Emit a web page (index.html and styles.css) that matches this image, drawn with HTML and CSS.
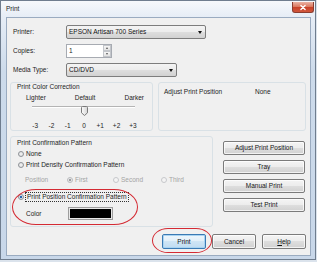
FILE: index.html
```html
<!DOCTYPE html>
<html>
<head>
<meta charset="utf-8">
<link rel="stylesheet" href="styles.css">
</head>
<body>
<div class="window">
  <div class="titlebar">
    <span class="title">Print</span>
    <div class="close">
      <svg viewBox="0 0 22 11" width="22" height="11"><path d="M8.7 3.2 L13.3 7.8 M13.3 3.2 L8.7 7.8" stroke="#fff" stroke-width="1.5" stroke-linecap="round"/></svg>
    </div>
  </div>
  <div class="content">
    <div class="fields">
      <span class="lbl">Printer:</span>
      <div class="combo combo-printer"><span>EPSON Artisan 700 Series</span><i class="arrow"></i></div>
      <span class="lbl">Copies:</span>
      <div class="spin"><span class="spin-val">1</span><div class="spin-btns"><div class="spin-btn"><i class="up"></i></div><div class="spin-btn"><i class="down"></i></div></div></div>
      <span class="lbl">Media Type:</span>
      <div class="combo combo-media"><span>CD/DVD</span><i class="arrow"></i></div>
    </div>

    <div class="groups">
      <div class="group color-group">
        <div class="gtitle">Print Color Correction</div>
        <div class="scale-names"><span class="s-left">Lighter</span><span>Default</span><span class="s-right">Darker</span></div>
        <div class="slider">
          <div class="track"></div>
          <svg class="thumb" viewBox="0 0 7 10" width="7" height="10">
            <defs><linearGradient id="tg" x1="0" y1="0" x2="1" y2="0"><stop offset="0" stop-color="#fdfdfd"/><stop offset="1" stop-color="#d4d4d4"/></linearGradient></defs>
            <path d="M0.5 1.5 Q0.5 0.5 1.5 0.5 H5.5 Q6.5 0.5 6.5 1.5 V6.8 L3.5 9.5 L0.5 6.8 Z" fill="url(#tg)" stroke="#7a7a7a" stroke-width="1"/>
          </svg>
        </div>
        <div class="ticks"><span>-3</span><span>-2</span><span>-1</span><span>0</span><span>+1</span><span>+2</span><span>+3</span></div>
      </div>
      <div class="group pos-group">
        <span>Adjust Print Position</span><span>None</span>
      </div>
    </div>

    <div class="lower">
      <div class="group confirm-group">
        <div class="gtitle">Print Confirmation Pattern</div>
        <div class="opt opt-first"><i class="radio"></i><span>None</span></div>
        <div class="opt"><i class="radio"></i><span>Print Density Confirmation Pattern</span></div>
        <div class="position-row">
          <span class="disabled">Position</span>
          <div class="opt-inline"><i class="radio radio-dis-checked"></i><span class="disabled">First</span></div>
          <div class="opt-inline"><i class="radio radio-dis"></i><span class="disabled">Second</span></div>
          <div class="opt-inline"><i class="radio radio-dis"></i><span class="disabled">Third</span></div>
        </div>
        <div class="opt opt-focus"><i class="radio radio-checked"></i><span class="focus">Print Position Confirmation Pattern</span></div>
        <div class="color-row"><span class="color-lbl">Color</span><div class="swatch"><div class="swatch-fill"></div></div></div>
      </div>
      <div class="side-buttons">
        <div class="btn">Adjust Print Position</div>
        <div class="btn">Tray</div>
        <div class="btn">Manual Print</div>
        <div class="btn">Test Print</div>
      </div>
    </div>

    <div class="footer">
      <div class="btn btn-foot btn-default">Print</div>
      <div class="btn btn-foot">Cancel</div>
      <div class="btn btn-foot"><span><u>H</u>elp</span></div>
    </div>

    <div class="mark mark-pattern"></div>
    <div class="mark mark-print"></div>
  </div>
</div>
</body>
</html>
```

FILE: styles.css
```css
* { box-sizing: border-box; }
html, body { margin: 0; padding: 0; }
body {
  width: 317px;
  height: 262px;
  background: #dbe3ec;
  font-family: "Liberation Sans", Arial, sans-serif;
  font-size: 6.5px;
  line-height: 8px;
  color: #1c1c1c;
  overflow: hidden;
}
.window {
  width: 316px;
  height: 260px;
  border: 1px solid #6f7d8e;
  background: linear-gradient(#f6f8fb 0, #e6edf6 16px, #cddbeb 70px, #c8d7e9 100%);
  padding: 0 4px 3px 5px;
  display: flex;
  flex-direction: column;
}
.titlebar {
  height: 16px;
  display: flex;
  align-items: flex-start;
}
.title {
  padding-top: 4px;
  color: #1a1a1a;
}
.close {
  margin-left: auto;
  margin-right: -3px;
  margin-top: 1px;
  width: 22px;
  height: 11px;
  border: 1px solid #8b3d30;
  border-top: none;
  border-radius: 0 0 3px 3px;
  background: linear-gradient(#eab3a4 0, #dc7b62 45%, #c8432a 55%, #d0563b 100%);
  display: flex;
}
.close svg { display: block; }

.content {
  flex: 1;
  position: relative;
  border: 1px solid #9aabc0;
  background: #f0f0f0;
  padding: 7px 4px 0 3px;
  display: flex;
  flex-direction: column;
}

/* form rows */
.fields {
  display: grid;
  grid-template-columns: 53px auto;
  row-gap: 5px;
  align-items: center;
  justify-items: start;
  padding-left: 3px;
}
.combo {
  height: 14px;
  border: 1px solid #7d7d7d;
  border-radius: 2px;
  background: linear-gradient(#f4f4f4 0, #ececec 50%, #dedede 50%, #d2d2d2 100%);
  display: flex;
  align-items: center;
  padding-left: 2px;
  color: #111;
}
.combo-printer { width: 140px; }
.combo-media { width: 111px; }
.arrow {
  margin-left: auto;
  margin-right: 3px;
  width: 0;
  height: 0;
  border-left: 2.5px solid transparent;
  border-right: 2.5px solid transparent;
  border-top: 3px solid #111;
}
.spin {
  width: 46px;
  height: 14px;
  border: 1px solid #a7abb2;
  background: #fff;
  display: flex;
  align-items: center;
  padding-left: 2px;
}
.spin-btns {
  margin-left: auto;
  width: 8px;
  height: 12px;
  display: flex;
  flex-direction: column;
}
.spin-btn {
  flex: 1;
  border: 1px solid #c3c6cb;
  background: linear-gradient(#f6f6f6, #e2e2e2);
  display: flex;
  align-items: center;
  justify-content: center;
}
.spin-btn .up {
  width: 0; height: 0;
  border-left: 1.5px solid transparent;
  border-right: 1.5px solid transparent;
  border-bottom: 2px solid #555;
}
.spin-btn .down {
  width: 0; height: 0;
  border-left: 1.5px solid transparent;
  border-right: 1.5px solid transparent;
  border-top: 2px solid #555;
}

/* group boxes */
.groups {
  display: flex;
  gap: 5px;
  margin-top: 5px;
}
.group {
  border: 1px solid #d9e1e6;
  border-radius: 3px;
}
.gtitle {
  margin-left: 6px;
}
.color-group {
  width: 143px;
  height: 49px;
}
.scale-names {
  display: grid;
  grid-template-columns: 1fr auto 1fr;
  width: 118px;
  margin: 3px 0 0 15px;
}
.s-left { justify-self: start; }
.s-right { justify-self: end; }
.slider {
  position: relative;
  width: 103px;
  height: 10px;
  margin: 1px 0 0 21px;
}
.track {
  margin-top: 4px;
  height: 2px;
  border-top: 1px solid #b4b4b4;
  border-bottom: 1px solid #ffffff;
}
.thumb {
  position: absolute;
  left: 49px;
  top: 0;
  display: block;
}
.ticks {
  display: grid;
  grid-template-columns: repeat(7, 1fr);
  width: 114px;
  margin: 6px 0 0 16px;
  text-align: center;
}
.pos-group {
  flex: 1;
  height: 49px;
  padding: 5px 0 0 5px;
  display: grid;
  grid-template-columns: 91px auto;
  align-content: start;
}

/* confirmation */
.lower {
  display: flex;
  margin-top: 5px;
}
.confirm-group {
  width: 203px;
  padding: 2px 0 6px 0;
}
.opt {
  display: flex;
  align-items: center;
  gap: 2px;
  margin: 3px 0 0 7px;
  height: 8px;
}
.radio {
  display: block;
  width: 6px;
  height: 6px;
  border-radius: 50%;
  border: 1px solid #8f9297;
  background: radial-gradient(circle, #f4f4f4 0, #d9dadc 100%);
}
.radio-checked {
  background: radial-gradient(circle, #3a7fd0 0, #1d4f96 1.3px, #e4ebf3 1.6px, #cfd5dc 100%);
}
.radio-dis {
  border-color: #c6c8cb;
  background: #f4f4f4;
}
.radio-dis-checked {
  border-color: #b9bbbe;
  background: radial-gradient(circle, #9c9ea2 0, #9c9ea2 1.3px, #ececec 1.6px);
}
.disabled { color: #a4a4a4; }
.position-row {
  display: grid;
  grid-template-columns: 42px 46px 48px auto;
  align-items: center;
  margin: 7px 0 0 14px;
  height: 8px;
}
.opt-inline {
  display: flex;
  align-items: center;
  gap: 2px;
}
.opt-focus {
  margin-top: 8px;
  height: 10px;
  gap: 1px;
}
.focus {
  border: 1px dotted #333;
  padding: 0 1px;
}
.color-row {
  display: flex;
  align-items: center;
  margin: 5px 0 0 15px;
  height: 13px;
}
.color-lbl { width: 42px; }
.swatch {
  width: 45px;
  height: 13px;
  border: 1px solid #9d9d9d;
  background: #e8e8e8;
  padding: 1px;
}
.swatch-fill {
  width: 100%;
  height: 100%;
  background: #000;
}

/* buttons */
.side-buttons {
  margin-left: auto;
  margin-right: 1px;
  margin-top: 5px;
  width: 82px;
  display: flex;
  flex-direction: column;
  gap: 5px;
}
.btn {
  height: 14px;
  border: 1px solid #7b7b7b;
  border-radius: 2px;
  background: linear-gradient(#f4f4f4 0, #ececec 50%, #dedede 50%, #d1d1d1 100%);
  box-shadow: inset 0 0 0 1px rgba(255,255,255,0.7);
  display: flex;
  align-items: center;
  justify-content: center;
  color: #151515;
}
.footer {
  display: flex;
  justify-content: flex-end;
  gap: 6px;
  margin-top: 7px;
}
.btn-foot {
  width: 44px;
  height: 15px;
}
.btn-default {
  border-color: #3b7ab4;
  background: linear-gradient(#eef6fc 0, #e1eff9 50%, #cfe5f5 50%, #c0dcf1 100%);
  box-shadow: inset 0 0 0 1px #a9d4f2;
}

/* red annotation marks */
.mark {
  position: absolute;
  border: 1.5px solid #d42a33;
}
.mark-pattern {
  left: 5px;
  top: 171px;
  width: 126px;
  height: 36px;
  border-radius: 24px / 18px;
}
.mark-print {
  left: 145px;
  top: 210px;
  width: 60px;
  height: 25px;
  border-radius: 16px / 12.5px;
}
```
